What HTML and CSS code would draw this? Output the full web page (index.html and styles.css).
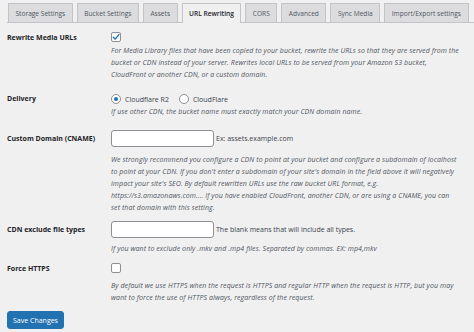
FILE: index.html
```html
<!DOCTYPE html>
<html>
<head>
<meta charset="utf-8">
<link rel="stylesheet" href="styles.css">
</head>
<body>
<div class="wrap">
  <nav class="tabs">
    <a class="tab">Storage Settings</a>
    <a class="tab">Bucket Settings</a>
    <a class="tab">Assets</a>
    <a class="tab active">URL Rewriting</a>
    <a class="tab">CORS</a>
    <a class="tab">Advanced</a>
    <a class="tab">Sync Media</a>
    <a class="tab">Import/Export settings</a>
  </nav>

  <div class="row row-first">
    <div class="label label-check">Rewrite Media URLs</div>
    <div class="field">
      <span class="checkbox checked">
        <svg viewBox="0 0 10 10" width="10" height="10"><path d="M2.3 5.2 L4.2 7.1 L7.9 2.6" fill="none" stroke="#2271b1" stroke-width="1.4" stroke-linecap="round" stroke-linejoin="round"/></svg>
      </span>
      <p class="desc desc-check">For Media Library files that have been copied to your bucket, rewrite the URLs so that they are served from the<br>bucket or CDN instead of your server. Rewrites local URLs to be served from your Amazon S3 bucket,<br>CloudFront or another CDN, or a custom domain.</p>
    </div>
  </div>

  <div class="row row-delivery">
    <div class="label">Delivery</div>
    <div class="field">
      <div class="radios">
        <label class="radio-item"><span class="radio checked"></span>Cloudflare R2</label>
        <label class="radio-item"><span class="radio"></span>CloudFlare</label>
      </div>
      <p class="desc desc-radio">If use other CDN, the bucket name must exactly match your CDN domain name.</p>
    </div>
  </div>

  <div class="row row-domain">
    <div class="label label-input">Custom Domain (CNAME)</div>
    <div class="field">
      <div class="input-line"><span class="input"></span><span class="hint">Ex: assets.example.com</span></div>
      <p class="desc desc-input">We strongly recommend you configure a CDN to point at your bucket and configure a subdomain of localhost<br>to point at your CDN. If you don't enter a subdomain of your site's domain in the field above it will negatively<br>impact your site's SEO. By default rewritten URLs use the raw bucket URL format, e.g.<br>https://s3.amazonaws.com.... If you have enabled CloudFront, another CDN, or are using a CNAME, you can<br>set that domain with this setting.</p>
    </div>
  </div>

  <div class="row row-exclude">
    <div class="label label-input">CDN exclude file types</div>
    <div class="field">
      <div class="input-line"><span class="input"></span><span class="hint">The blank means that will include all types.</span></div>
      <p class="desc desc-exclude">If you want to exclude only .mkv and .mp4 files. Separated by commas. EX: mp4,mkv</p>
    </div>
  </div>

  <div class="row row-https">
    <div class="label label-check">Force HTTPS</div>
    <div class="field">
      <span class="checkbox"></span>
      <p class="desc desc-check2">By default we use HTTPS when the request is HTTPS and regular HTTP when the request is HTTP, but you may<br>want to force the use of HTTPS always, regardless of the request.</p>
    </div>
  </div>

  <div class="actions">
    <button class="button-primary">Save Changes</button>
  </div>
</div>
</body>
</html>
```

FILE: styles.css
```css
html, body {
  margin: 0;
  padding: 0;
  background: #f0f0f1;
}
body {
  font-family: "Open Sans", "Noto Sans", sans-serif;
  font-size: 7px;
  color: #1d2327;
  width: 474px;
  height: 332px;
  overflow: hidden;
}
.wrap {
  padding: 3px 0 0 7px;
}
.tabs {
  display: flex;
  gap: 4px;
  border-bottom: 1px solid #c3c4c7;
  padding-left: 1px;
  height: 19px;
}
.tab {
  display: flex;
  align-items: center;
  height: 18px;
  padding: 0 6.5px;
  background: #dcdcde;
  border: 1px solid #c3c4c7;
  border-bottom: none;
  color: #50575e;
  font-size: 6.6px;
  font-weight: 400;
  white-space: nowrap;
}
.tab.active {
  background: #f0f0f1;
  color: #1d2327;
  height: 19px;
  margin-bottom: -1px;
  font-weight: 600;
}
.row {
  display: grid;
  grid-template-columns: 104px 1fr;
}
.row-first { margin-top: 9px; }
.row-delivery { margin-top: 12px; }
.row-domain { margin-top: 12px; }
.row-exclude { margin-top: 7px; }
.row-https { margin-top: 8px; }
.label {
  font-weight: 700;
  line-height: 12px;
  color: #1d2327;
  white-space: nowrap;
}
.label-check { line-height: 11px; }
.label-input { line-height: 17px; }
.field { white-space: nowrap; }
.desc {
  margin: 0;
  font-style: italic;
  color: #50575e;
  line-height: 12px;
  letter-spacing: 0.08px;
}
.desc-check { margin-top: 3px; }
.desc-radio { margin-top: 1px; }
.desc-input { margin-top: 7px; }
.desc-exclude { margin-top: 5px; }
.desc-check2 { margin-top: 7px; }
.checkbox {
  display: block;
  box-sizing: border-box;
  width: 10px;
  height: 10px;
  border: 1px solid #8c8f94;
  border-radius: 2px;
  background: #fff;
  position: relative;
}
.checkbox svg {
  position: absolute;
  left: -1px;
  top: -1px;
}
.radios {
  display: flex;
  gap: 10px;
  height: 12px;
  align-items: center;
}
.radio-item {
  display: flex;
  align-items: center;
  gap: 4px;
  color: #3c434a;
}
.radio {
  box-sizing: border-box;
  width: 10px;
  height: 10px;
  border: 1px solid #8c8f94;
  border-radius: 50%;
  background: #fff;
  display: flex;
  align-items: center;
  justify-content: center;
}
.radio.checked::after {
  content: "";
  width: 4px;
  height: 4px;
  border-radius: 50%;
  background: #2271b1;
}
.input-line {
  display: flex;
  align-items: center;
  gap: 2px;
  height: 17px;
}
.input {
  box-sizing: border-box;
  width: 103px;
  height: 17px;
  background: #fff;
  border: 1px solid #8c8f94;
  border-radius: 3px;
}
.hint { color: #3c434a; }
.actions { margin-top: 7px; }
.button-primary {
  font-family: inherit;
  font-size: 7px;
  width: 57px;
  height: 18px;
  padding: 0;
  background: #2271b1;
  color: #fff;
  border: 1px solid #2271b1;
  border-radius: 3px;
}
```
